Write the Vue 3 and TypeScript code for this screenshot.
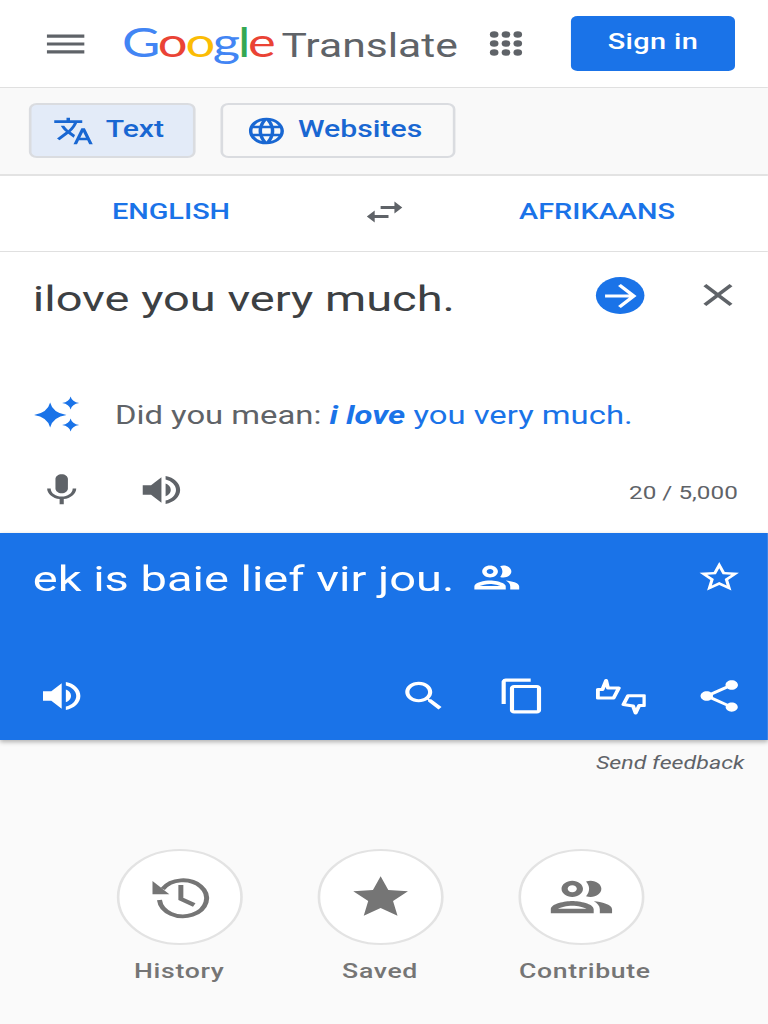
<script setup lang="ts">
const icons: Record<string, string> = {
  menu: 'M3 18h18v-2H3v2zm0-5h18v-2H3v2zm0-7v2h18V6H3z',
  translate: 'M12.87 15.07l-2.54-2.51.03-.03c1.74-1.94 2.98-4.17 3.71-6.53H17V4h-7V2H8v2H1v1.99h11.17C11.5 7.92 10.44 9.75 9 11.35 8.07 10.32 7.3 9.19 6.69 8h-2c.73 1.63 1.73 3.17 2.98 4.56l-5.09 5.02L4 19l5-5 3.11 3.11.76-2.04zM18.5 10h-2L12 22h2l1.12-3h4.75L21 22h2l-4.5-12zm-2.62 7l1.62-4.33L19.12 17h-3.24z',
  globe: 'M11.99 2C6.47 2 2 6.48 2 12s4.47 10 9.99 10C17.52 22 22 17.52 22 12S17.52 2 11.99 2zm6.93 6h-2.95c-.32-1.25-.78-2.45-1.38-3.56 1.84.63 3.37 1.91 4.33 3.56zM12 4.04c.83 1.2 1.48 2.53 1.91 3.96h-3.82c.43-1.43 1.08-2.76 1.91-3.96zM4.26 14C4.1 13.36 4 12.69 4 12s.1-1.36.26-2h3.38c-.08.66-.14 1.32-.14 2 0 .68.06 1.34.14 2H4.26zm.82 2h2.95c.32 1.25.78 2.45 1.38 3.56-1.84-.63-3.37-1.9-4.33-3.56zm2.95-8H5.08c.96-1.66 2.49-2.93 4.33-3.56C8.81 5.55 8.35 6.75 8.03 8zM12 19.96c-.83-1.2-1.48-2.53-1.91-3.96h3.82c-.43 1.43-1.08 2.76-1.91 3.96zM14.34 14H9.66c-.09-.66-.16-1.32-.16-2 0-.68.07-1.35.16-2h4.68c.09.65.16 1.32.16 2 0 .68-.07 1.34-.16 2zm.25 5.56c.6-1.11 1.06-2.31 1.38-3.56h2.95c-.96 1.65-2.49 2.93-4.33 3.56zM16.36 14c.08-.66.14-1.32.14-2 0-.68-.06-1.34-.14-2h3.38c.16.64.26 1.31.26 2s-.1 1.36-.26 2h-3.38z',
  swap: 'M6.99 11L3 15l3.99 4v-3H14v-2H6.99v-3zM21 9l-3.99-4v3H10v2h7.01v3L21 9z',
  arrow: 'M12 4l-1.41 1.41L16.17 11H4v2h12.17l-5.58 5.59L12 20l8-8z',
  close: 'M19 6.41L17.59 5 12 10.59 6.41 5 5 6.41 10.59 12 5 17.59 6.41 19 12 13.41 17.59 19 19 17.59 13.41 12z',
  mic: 'M12 14c1.66 0 2.99-1.34 2.99-3L15 5c0-1.66-1.34-3-3-3S9 3.34 9 5v6c0 1.66 1.34 3 3 3zm5.3-3c0 3-2.54 5.1-5.3 5.1S6.7 14 6.7 11H5c0 3.41 2.72 6.23 6 6.72V21h2v-3.28c3.28-.48 6-3.3 6-6.72h-1.7z',
  volume: 'M3 9v6h4l5 5V4L7 9H3zm13.5 3c0-1.77-1.02-3.29-2.5-4.03v8.05c1.48-.73 2.5-2.25 2.5-4.02zM14 3.23v2.06c2.89.86 5 3.54 5 6.71s-2.11 5.85-5 6.71v2.06c4.01-.91 7-4.49 7-8.77s-2.99-7.86-7-8.77z',
  people: 'M9 13.75c-2.34 0-7 1.17-7 3.5V19h14v-1.75c0-2.33-4.66-3.5-7-3.5zM4.34 17c.84-.58 2.87-1.25 4.66-1.25s3.82.67 4.66 1.25H4.34zM9 12c1.93 0 3.5-1.57 3.5-3.5S10.93 5 9 5 5.5 6.57 5.5 8.5 7.07 12 9 12zm0-5c.83 0 1.5.67 1.5 1.5S9.83 10 9 10s-1.5-.67-1.5-1.5S8.17 7 9 7zm7.04 6.81c1.16.84 1.96 1.96 1.96 3.44V19h4v-1.75c0-2.02-3.5-3.17-5.96-3.44zM15 12c1.93 0 3.5-1.57 3.5-3.5S16.93 5 15 5c-.54 0-1.04.13-1.5.35.63.89 1 1.98 1 3.15s-.37 2.26-1 3.15c.46.22.96.35 1.5.35z',
  starO: 'M22 9.24l-7.19-.62L12 2 9.19 8.63 2 9.24l5.46 4.73L5.82 21 12 17.27 18.18 21l-1.63-7.03L22 9.24zM12 15.4l-3.76 2.27 1-4.28-3.32-2.88 4.38-.38L12 6.1l1.71 4.04 4.38.38-3.32 2.88 1 4.28L12 15.4z',
  star: 'M12 17.27L18.18 21l-1.64-7.03L22 9.24l-7.19-.61L12 2 9.19 8.63 2 9.24l5.46 4.73L5.82 21z',
  search: 'M15.5 14h-.79l-.28-.27C15.41 12.59 16 11.11 16 9.5 16 5.91 13.09 3 9.5 3S3 5.91 3 9.5 5.91 16 9.5 16c1.61 0 3.09-.59 4.23-1.57l.27.28v.79l5 4.99L20.49 19l-4.99-5zm-6 0C7.01 14 5 11.99 5 9.5S7.01 5 9.5 5 14 7.01 14 9.5 11.99 14 9.5 14z',
  copy: 'M16 1H4c-1.1 0-2 .9-2 2v14h2V3h12V1zm3 4H8c-1.1 0-2 .9-2 2v14c0 1.1.9 2 2 2h11c1.1 0 2-.9 2-2V7c0-1.1-.9-2-2-2zm0 16H8V7h11v14z',
  share: 'M18 16.08c-.76 0-1.44.3-1.96.77L8.91 12.7c.05-.23.09-.46.09-.7s-.04-.47-.09-.7l7.05-4.11c.54.5 1.25.81 2.04.81 1.66 0 3-1.34 3-3s-1.34-3-3-3-3 1.34-3 3c0 .24.04.47.09.7L8.04 9.81C7.5 9.31 6.79 9 6 9c-1.66 0-3 1.34-3 3s1.34 3 3 3c.79 0 1.5-.31 2.04-.81l7.12 4.16c-.05.21-.08.43-.08.65 0 1.61 1.31 2.92 2.92 2.92 1.61 0 2.92-1.31 2.92-2.92s-1.31-2.92-2.92-2.92z',
}
const appDots: number[][] = [4, 12, 20].flatMap((y) => [4, 12, 20].map((x) => [x, y]))

function sparkle(cx: number, cy: number, r: number): string {
  const k = r * 0.16
  return `M${cx} ${cy - r}Q${cx + k} ${cy - k} ${cx + r} ${cy}Q${cx + k} ${cy + k} ${cx} ${cy + r}Q${cx - k} ${cy + k} ${cx - r} ${cy}Q${cx - k} ${cy - k} ${cx} ${cy - r}Z`
}
const sparklePath = [sparkle(12.2, 19, 12.5), sparkle(27.8, 7, 6.5), sparkle(27.8, 29, 6.5)].join('')
</script>

<template>
  <div class="page">
    <header class="top">
      <svg class="ic i38 grey menu" viewBox="0 0 24 24"><path :d="icons.menu" /></svg>
      <div class="logo">
        <span class="google"><span class="b">G</span><span class="r">o</span><span class="y">o</span><span class="b">g</span><span class="g">l</span><span class="r">e</span></span>
        <span class="word">Translate</span>
      </div>
      <svg class="apps grey" viewBox="0 0 24 24"><circle v-for="(d, i) in appDots" :key="i" :cx="d[0]" :cy="d[1]" r="2.9" /></svg>
      <button class="signin">Sign in</button>
    </header>

    <nav class="tabs">
      <div class="tab active">
        <svg class="ic i32 tabblue" viewBox="0 0 24 24"><path :d="icons.translate" /></svg>
        <span>Text</span>
      </div>
      <div class="tab web">
        <svg class="ic i32 tabblue" viewBox="0 0 24 24"><path :d="icons.globe" /></svg>
        <span>Websites</span>
      </div>
    </nav>

    <div class="langs">
      <span class="lang">ENGLISH</span>
      <svg class="ic i36 grey" viewBox="0 0 24 24"><path :d="icons.swap" /></svg>
      <span class="lang">AFRIKAANS</span>
    </div>

    <section class="source">
      <div class="src-row">
        <span class="big dark">ilove you very much.</span>
        <span class="go"><svg class="ic i36 white" viewBox="0 0 24 24"><path :d="icons.arrow" /></svg></span>
        <svg class="ic i38 grey close" viewBox="0 0 24 24"><path :d="icons.close" /></svg>
      </div>
      <div class="mean">
        <svg class="spark" viewBox="0 0 36 36"><path :d="sparklePath" /></svg>
        <span class="mean-text">Did you mean: <a><b><i>i love</i></b> you very much.</a></span>
      </div>
      <div class="tools">
        <svg class="ic i38 grey" viewBox="0 0 24 24"><path :d="icons.mic" /></svg>
        <svg class="ic i38 grey" viewBox="0 0 24 24"><path :d="icons.volume" /></svg>
        <span class="count">20 / 5,000</span>
      </div>
    </section>

    <section class="result">
      <div class="res-row">
        <span class="big">ek is baie lief vir jou.</span>
        <svg class="ic i41 white ppl" viewBox="0 0 24 24"><path :d="icons.people" /></svg>
        <svg class="ic i36 white star" viewBox="0 0 24 24"><path :d="icons.starO" /></svg>
      </div>
      <div class="res-tools">
        <svg class="ic i38 white first" viewBox="0 0 24 24"><path :d="icons.volume" /></svg>
        <svg class="ic i38 white" viewBox="0 0 24 24"><path :d="icons.search" /></svg>
        <svg class="ic i38 white" viewBox="0 0 24 24"><path :d="icons.copy" /></svg>
        <svg class="ic i38 thumbs" viewBox="0 0 38 38">
          <path d="M1.500 12.500H5L7.800 3.500 9.200 11H17.500L13.500 21H1.500Z" />
          <path d="M21 27.500L24.500 18.700H37V28.500H33L30.300 36 28.300 29Z" />
        </svg>
        <svg class="ic i38 white" viewBox="0 0 24 24"><path :d="icons.share" /></svg>
      </div>
    </section>

    <div class="feedback">Send feedback</div>

    <div class="shortcuts">
      <div class="shortcut">
        <div class="circle">
          <svg class="hist" viewBox="0 0 48 48">
            <path class="hist-line" d="M11 16A18 18 0 1 1 8.500 27" />
            <path d="M3.200 8V21.300H16Z" />
            <path class="hist-line" d="M24.800 12V26L35 32" />
          </svg>
        </div>
        <span class="label">History</span>
      </div>
      <div class="shortcut">
        <div class="circle">
          <svg class="ic big-s" viewBox="0 0 24 24"><path :d="icons.star" /></svg>
        </div>
        <span class="label">Saved</span>
      </div>
      <div class="shortcut">
        <div class="circle">
          <svg class="ic big-c" viewBox="0 0 24 24"><path :d="icons.people" /></svg>
        </div>
        <span class="label shifted">Contribute</span>
      </div>
    </div>
  </div>
</template>

<style>
html, body { background: #fafafa; overflow: hidden; }
</style>

<style scoped>
.page {
  width: 585.14px;
  height: 1024px;
  transform: scaleX(1.3125);
  transform-origin: 0 0;
  background: #fafafa;
  font-family: Roboto, "Liberation Sans", sans-serif;
  color: #3c4043;
}
.ic { display: block; flex: none; fill: currentColor; }
.i36 { width: 36px; height: 36px; }
.i32 { width: 32px; height: 32px; }
.i38 { width: 38px; height: 38px; }
.i41 { width: 41px; height: 41px; }
.grey { color: #5f6368; fill: #5f6368; }
.white { color: #fff; }
.tabblue { color: #1967d2; }

.top {
  height: 87px;
  display: flex;
  align-items: center;
  background: #fff;
  border-bottom: 1px solid #e0e0e0;
}
.menu { margin-left: 31px; }
.logo { display: flex; align-items: baseline; margin-left: 24px; width: 279px; flex: none; padding-bottom: 4px; }
.google { font-family: Lato, sans-serif; font-size: 40px; letter-spacing: -1.700px; }
.b { color: #4285f4; }
.r { color: #ea4335; }
.y { color: #fbbc05; }
.g { color: #34a853; }
.word { font-size: 32.500px; color: #5f6368; margin-left: 6px; }
.apps { width: 27px; height: 27px; flex: none; }
.signin {
  width: 125px;
  height: 55px;
  margin-left: 36px;
  border: 0;
  border-radius: 5px;
  background: #1a73e8;
  color: #fff;
  font: 500 22px Roboto, sans-serif;
  letter-spacing: .3px;
  padding: 0 0 4px;
}

.tabs {
  height: 88px;
  box-sizing: border-box;
  padding: 15px 0 0 22px;
  display: flex;
  gap: 19px;
  align-items: flex-start;
  border-bottom: 2px solid #e3e3e3;
  background: #f9f9f9;
}
.tab {
  height: 55px;
  box-sizing: border-box;
  border: 2px solid #dadce0;
  border-radius: 6px;
  display: flex;
  align-items: center;
  color: #1967d2;
  font-size: 23px;
  font-weight: 500;
}
.tab span { margin-bottom: 3px; }
.active { width: 127px; background: #e3ebf8; gap: 8.500px; padding-left: 16px; }
.web { width: 179px; padding-left: 16.500px; gap: 8.500px; }

.langs {
  height: 76px;
  box-sizing: border-box;
  background: #fff;
  border-bottom: 1px solid #e0e0e0;
  display: grid;
  grid-template-columns: 1fr 64px 1fr;
  align-items: center;
  justify-items: center;
  padding-bottom: 4px;
}
.lang { color: #1a73e8; font-size: 22px; font-weight: 500; }

.source { height: 281px; box-sizing: border-box; background: #fff; padding: 23px 0 0 25px; }
.src-row { display: flex; align-items: center; height: 46px; }
.big { font-size: 35.800px; color: #fff; line-height: 46px; width: 429px; flex: none; }
.dark { color: #3c4043; padding-top: 2px; }
.go {
  width: 37px;
  height: 37px;
  border-radius: 50%;
  background: #1a73e8;
  display: flex;
  align-items: center;
  justify-content: center;
  flex: none;
  margin-top: -5px;
}
.close { margin-left: 37px; margin-top: -6px; }
.mean { display: flex; align-items: center; height: 44px; margin-top: 71px; }
.spark { width: 36px; height: 36px; fill: #1a73e8; margin-left: 1px; flex: none; }
.mean-text { font-size: 25px; color: #5f6368; margin-left: 25.600px; white-space: pre; padding-top: 2px; }
.mean-text a { color: #1a73e8; }
.tools { display: flex; align-items: center; height: 40px; margin-top: 34px; margin-left: 3px; gap: 37.500px; }
.count { margin-left: auto; margin-right: 23px; font-size: 18.500px; color: #5f6368; padding-top: 6px; }

.result {
  height: 207px;
  box-sizing: border-box;
  background: #1a73e8;
  padding-top: 21px;
  box-shadow: 0 2px 4px rgba(0, 0, 0, .3);
  position: relative;
}
.res-row { display: flex; align-items: center; height: 46px; padding-left: 25px; }
.res-row .big { width: auto; padding-top: 4px; }
.ppl { margin-left: 12px; }
.star { margin-left: auto; margin-right: 19.500px; }
.res-tools { display: flex; align-items: center; height: 40px; margin-top: 76px; padding-left: 28px; gap: 37px; }
.first { margin-right: 201px; }
.thumbs { fill: none; stroke: #fff; stroke-width: 3; stroke-linejoin: round; }

.feedback { margin-top: 13px; text-align: right; padding-right: 18px; font-size: 17.700px; line-height: 20px; font-style: italic; color: #5f6368; }

.shortcuts { display: flex; justify-content: center; padding-right: 6px; margin-top: 76px; }
.shortcut { width: 153px; display: flex; flex-direction: column; align-items: center; }
.circle {
  width: 96px;
  height: 96px;
  box-sizing: border-box;
  border-radius: 50%;
  border: 2px solid #e3e3e3;
  background: #fff;
  display: flex;
  align-items: center;
  justify-content: center;
  color: #757575;
}
.hist { width: 48px; height: 48px; fill: #757575; }
.hist-line { fill: none; stroke: #757575; stroke-width: 3.800; }
.big-s { width: 50px; height: 50px; }
.big-c { width: 56px; height: 56px; }
.label { margin-top: 14px; font-size: 20.300px; color: #757575; letter-spacing: .5px; font-weight: 500; white-space: nowrap; }
.shifted { margin-left: 6px; }
</style>
